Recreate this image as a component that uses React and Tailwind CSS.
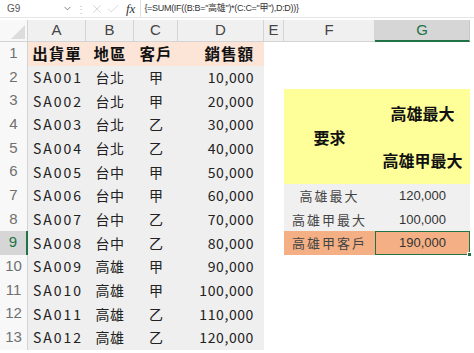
import React from "react";
import { X, Check, ChevronDown } from "lucide-react";

const rows = [
  ["SA001", "台北", "甲", "10,000"],
  ["SA002", "台北", "甲", "20,000"],
  ["SA003", "台北", "乙", "30,000"],
  ["SA004", "台北", "乙", "40,000"],
  ["SA005", "台中", "甲", "50,000"],
  ["SA006", "台中", "甲", "60,000"],
  ["SA007", "台中", "乙", "70,000"],
  ["SA008", "台中", "乙", "80,000"],
  ["SA009", "高雄", "甲", "90,000"],
  ["SA010", "高雄", "甲", "100,000"],
  ["SA011", "高雄", "乙", "110,000"],
  ["SA012", "高雄", "乙", "120,000"],
];

const cjk = "font-['Noto_Sans_CJK_TC','Noto_Sans_CJK_SC',sans-serif]";

function RowNum({ n, active }) {
  return (
    <div
      className={
        "flex items-end justify-center pb-[1px] text-[15px] font-['Liberation_Sans',sans-serif] " +
        (active
          ? "bg-[#d6d6d6] text-[#217346] border-r-2 border-[#217346]"
          : "bg-[#f8f8f8] text-[#707070] border-r border-[#d4d4d4]")
      }
    >
      {n}
    </div>
  );
}

function RightCells({ r }) {
  // columns E, F, G for sheet row r
  const e = <div key="e" className="bg-white" />;
  if (r === 3)
    return [
      e,
      <div key="f" className={"row-span-4 bg-[#ffff99] flex items-center justify-center text-[16px] font-bold text-[#111] " + cjk}>
        要求
      </div>,
      <div key="g" className={"row-span-2 bg-[#ffff99] flex items-center justify-center text-[16px] font-bold text-[#111] " + cjk}>
        高雄最大
      </div>,
    ];
  if (r === 4 || r === 6) return [e];
  if (r === 5)
    return [
      e,
      <div key="g" className={"row-span-2 bg-[#ffff99] flex items-center justify-center text-[16px] font-bold text-[#111] " + cjk}>
        高雄甲最大
      </div>,
    ];
  if (r === 7 || r === 8)
    return [
      e,
      <div key="f" className={"bg-[#f0f0f0] flex items-center justify-center text-[13px] tracking-[2px] text-[#444] " + cjk}>
        {r === 7 ? "高雄最大" : "高雄甲最大"}
      </div>,
      <div key="g" className="bg-[#f0f0f0] flex items-center justify-center text-[13px] text-[#333] font-['Liberation_Sans',sans-serif]">
        {r === 7 ? "120,000" : "100,000"}
      </div>,
    ];
  if (r === 9)
    return [
      e,
      <div key="f" className={"bg-[#f4b084] flex items-center justify-center text-[13px] tracking-[2px] text-[#444] " + cjk}>
        高雄甲客戶
      </div>,
      <div key="g" className="relative bg-[#f4b084] border-[1.5px] border-[#217346] flex items-center justify-center text-[13px] text-[#333] font-['Liberation_Sans',sans-serif]">
        190,000
        <span className="absolute -right-[3px] -bottom-[3px] w-[5px] h-[5px] bg-[#217346] border border-white" />
      </div>,
    ];
  return [e, <div key="f" className="bg-white" />, <div key="g" className="bg-white" />];
}

export default function App() {
  const cols = ["A", "B", "C", "D", "E", "F", "G"];
  return (
    <div className="w-[474px] h-[353px] bg-white overflow-hidden">
      {/* formula bar */}
      <div className="h-[18px] flex items-center border-b border-[#e6e6e6] text-[#555]">
        <div className="w-[76px] h-full flex items-center justify-between pl-[7px] pr-[3px] font-['Liberation_Sans',sans-serif] text-[10px]">
          <span>G9</span>
          <ChevronDown size={11} strokeWidth={1.5} className="text-[#555]" />
        </div>
        <span className="w-[8px] text-[#bbb] text-[10px] leading-none text-center">⋮</span>
        <div className="flex items-center gap-[2px] pl-[6px]">
          <X size={14} strokeWidth={1.1} className="text-[#c4c4c4]" />
          <Check size={14} strokeWidth={1.1} className="text-[#c4c4c4]" />
        </div>
        <span className="ml-[6px] font-['Liberation_Serif',serif] italic text-[13px] text-[#333]">fx</span>
        <div className="ml-[5px] h-full border-l border-[#e0e0e0]" />
        <span className="ml-[3px] text-[9px] text-[#333] tracking-[-0.3px] font-['Liberation_Sans','Noto_Sans_CJK_TC',sans-serif]">
          {'{=SUM(IF((B:B="高雄")*(C:C="甲"),D:D))}'}
        </span>
      </div>

      <div className="mt-[2px] grid grid-cols-[28px_58px_48px_44px_86px_20px_91px_95px] grid-rows-[22px_repeat(13,23.67px)]">
        {/* header row */}
        <div className="relative bg-[#f8f8f8] border-r border-b border-[#d4d4d4]">
          <span className="absolute right-[2px] bottom-[2px] w-0 h-0 border-l-[14px] border-l-transparent border-b-[14px] border-b-[#dcdcdc]" />
        </div>
        {cols.map((c) => (
          <div
            key={c}
            className={
              "flex items-center justify-center text-[15px] font-['Liberation_Sans',sans-serif] border-r " +
              (c === "G"
                ? "bg-[#d6d6d6] text-[#217346] border-[#c8c8c8] border-b-2 border-b-[#217346]"
                : "bg-[#f0f0f0] text-[#444] border-[#d4d4d4] border-b border-b-[#d4d4d4]")
            }
          >
            {c}
          </div>
        ))}

        {/* row 1 */}
        <RowNum n={1} />
        {["出貨單", "地區", "客戶"].map((h) => (
          <div key={h} className={"bg-[#fce4d6] flex items-center justify-center text-[15.5px] font-bold tracking-[1px] text-[#111] " + cjk}>
            {h}
          </div>
        ))}
        <div className={"bg-[#fce4d6] flex items-center justify-end pr-[10px] text-[15.5px] font-bold tracking-[1px] text-[#111] " + cjk}>
          銷售額
        </div>
        <div className="bg-white" />
        <div className="bg-white" />
        <div className="bg-white" />

        {rows.map((d, i) => {
          const r = i + 2;
          return (
            <React.Fragment key={r}>
              <RowNum n={r} active={r === 9} />
              <div className={"bg-[#efefef] flex items-center justify-center pl-[2px] text-[14px] tracking-[2px] text-[#222] " + cjk}>{d[0]}</div>
              <div className={"bg-[#efefef] flex items-center justify-center text-[14px] tracking-[0.5px] text-[#222] " + cjk}>{d[1]}</div>
              <div className={"bg-[#efefef] flex items-center justify-center text-[14px] text-[#222] " + cjk}>{d[2]}</div>
              <div className={"bg-[#efefef] flex items-center justify-end pr-[10px] text-[14px] tracking-[0.6px] text-[#222] " + cjk}>{d[3]}</div>
              <RightCells r={r} />
            </React.Fragment>
          );
        })}
      </div>
    </div>
  );
}
